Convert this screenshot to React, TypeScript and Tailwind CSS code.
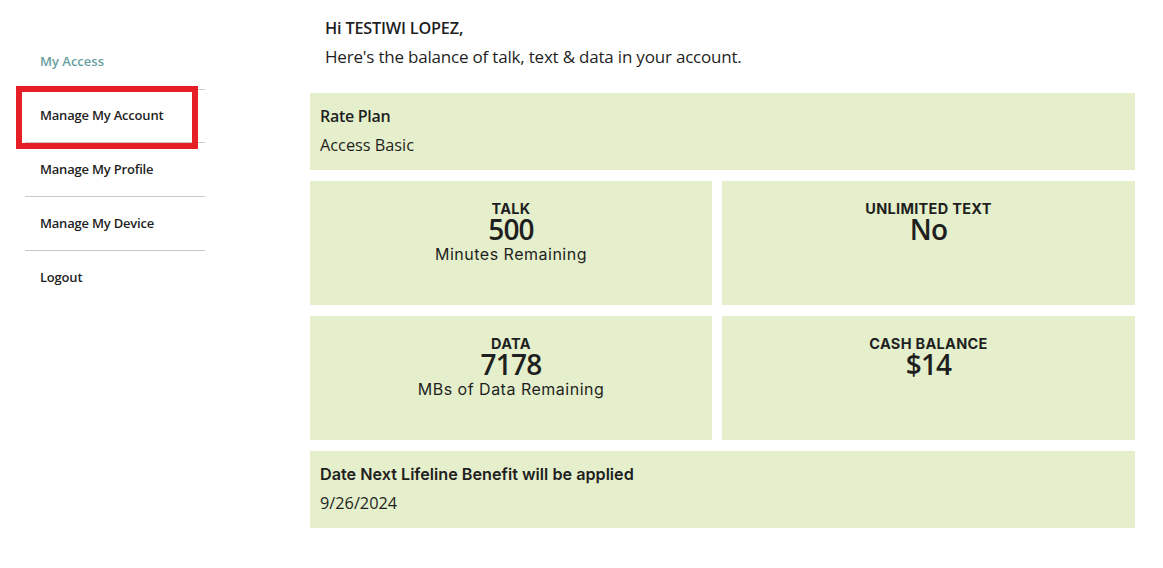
import React from "react";

const poppins = { fontFamily: "Inter, 'Noto Sans', sans-serif" };

function Stat({ label, value, sub }: { label: string; value: string; sub?: string }) {
  return (
    <div className="bg-[#e5efcb] h-[124px] flex flex-col items-center pt-[19px] text-[#1f1f1f]">
      <div className="text-[14.5px] leading-[17px] font-bold tracking-[0.3px]" style={poppins}>{label}</div>
      <div className="text-[28px] leading-[27px] font-semibold tracking-[-0.8px] mt-[-1px]" style={{ fontFamily: "'Open Sans', sans-serif" }}>{value}</div>
      {sub && <div className="text-[16px] leading-[22px] mt-[0px] tracking-[0.5px]" style={poppins}>{sub}</div>}
    </div>
  );
}

export default function App() {
  const items = ["Manage My Account", "Manage My Profile", "Manage My Device", "Logout"];
  return (
    <div className="w-[1163px] h-[568px] bg-white flex text-[#1f1f1f]" style={{ fontFamily: "'Open Sans', 'Noto Sans', sans-serif" }}>
      <aside className="w-[310px] shrink-0 pl-[25px] pt-[52px]">
        <div className="w-[180px]">
          <div className="pl-[15px] text-[13px] leading-[18px] font-semibold text-[#6a9fa0] h-[37px]">My Access</div>
          {items.map((t, i) => (
            <div key={t} className={"relative h-[54px] flex items-center pl-[15px] text-[13px] font-semibold tracking-[-0.2px] " + (i < 3 ? "border-b border-[#c8c8c8] " : "") + "border-t-0"} style={i === 0 ? { borderTop: "1px solid #c8c8c8" } : undefined}>
              {t}
              {i === 0 && <div className="absolute left-[-9px] top-[-4px] w-[182px] h-[63px] border-[6px] border-[#e61e25]" />}
            </div>
          ))}
        </div>
      </aside>
      <main className="w-[825px] pt-[17px]">
        <div className="pl-[15px] text-[16.3px] leading-[22px] font-semibold tracking-[-0.2px]">Hi TESTIWI LOPEZ,</div>
        <div className="pl-[15px] text-[17px] leading-[22px] mt-[7px] tracking-[-0.2px]">Here's the balance of talk, text &amp; data in your account.</div>
        <div className="mt-[25px] bg-[#e5efcb] h-[77px] pl-[10px] pt-[12px]">
          <div className="text-[16px] leading-[22px] font-semibold tracking-[-0.3px]">Rate Plan</div>
          <div className="text-[16.3px] leading-[22px] mt-[7px]">Access Basic</div>
        </div>
        <div className="grid grid-cols-[402px_413px] gap-x-[10px] gap-y-[11px] mt-[11px]">
          <Stat label="TALK" value="500" sub="Minutes Remaining" />
          <Stat label="UNLIMITED TEXT" value="No" />
          <Stat label="DATA" value="7178" sub="MBs of Data Remaining" />
          <Stat label="CASH BALANCE" value="$14" />
        </div>
        <div className="mt-[11px] bg-[#e5efcb] h-[77px] pl-[10px] pt-[12px]">
          <div className="text-[16.2px] leading-[22px] font-semibold tracking-[0px]" style={poppins}>Date Next Lifeline Benefit will be applied</div>
          <div className="text-[16.3px] leading-[22px] mt-[7px]">9/26/2024</div>
        </div>
      </main>
    </div>
  );
}
